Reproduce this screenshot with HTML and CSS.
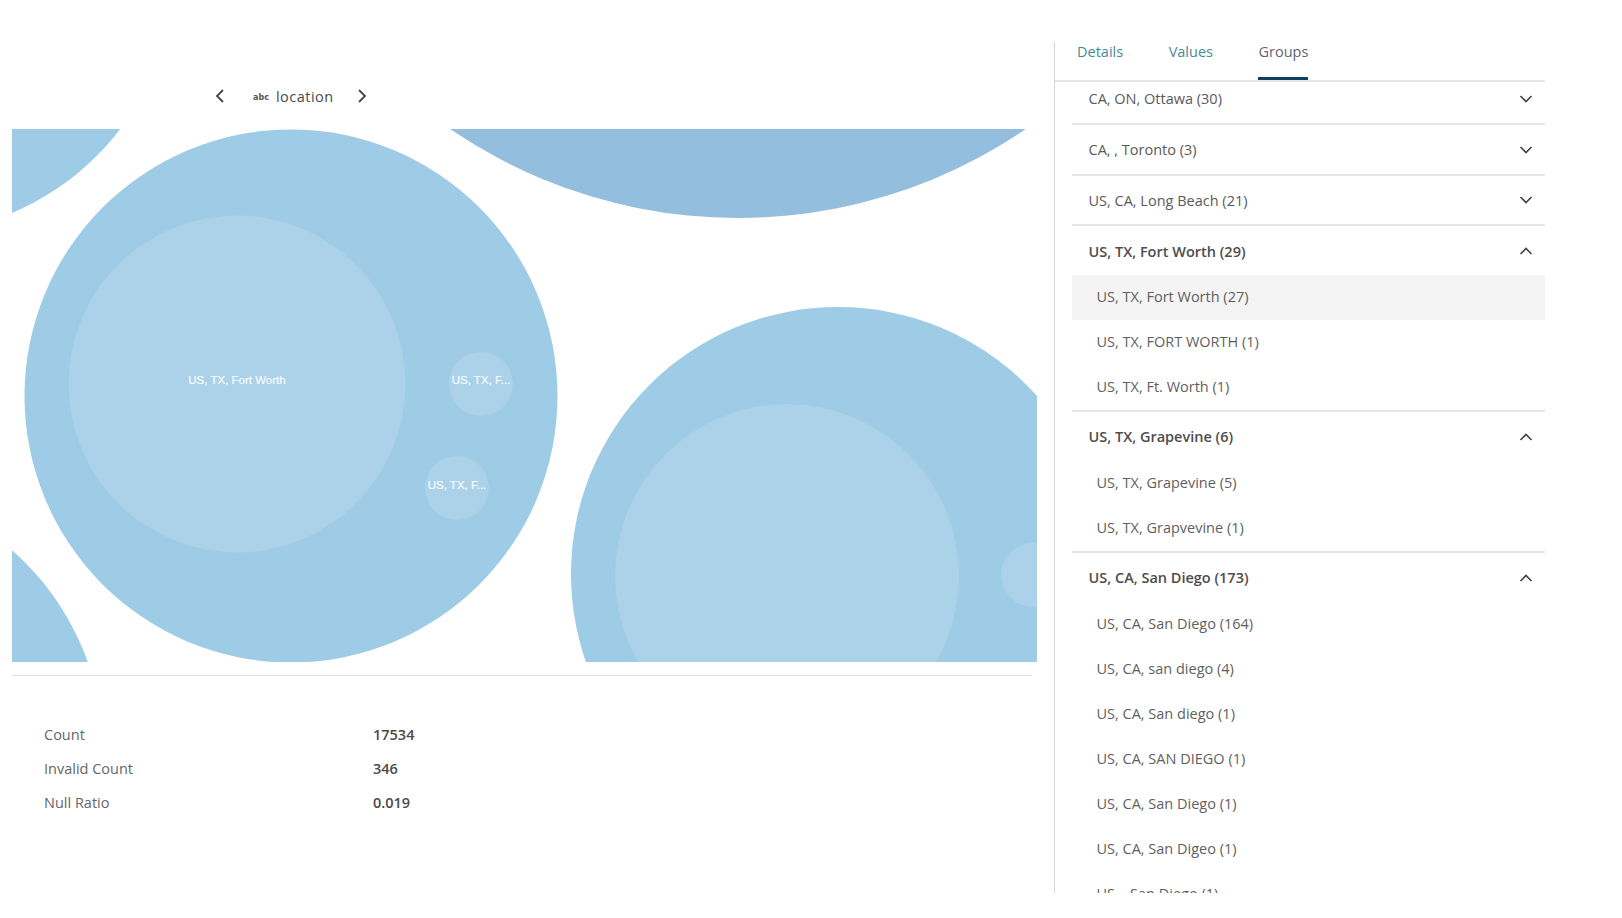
FILE: index.html
```html
<!DOCTYPE html>
<html lang="en">
<head>
<meta charset="utf-8">
<title>location</title>
<link rel="stylesheet" href="styles.css">
</head>
<body>
<div class="page">
  <main class="left">
    <div class="nav">
      <svg class="nav-chev" viewBox="0 0 12 16"><path d="M9 2 3 8l6 6"/></svg>
      <span class="abc">abc</span>
      <span class="nav-title">location</span>
      <svg class="nav-chev" viewBox="0 0 12 16"><path d="M3 2l6 6-6 6"/></svg>
    </div>
    <svg class="canvas" viewBox="12 129 1025 533" width="1025" height="533">
      <circle cx="-92" cy="-33" r="267" class="c-main"/>
      <circle cx="-164" cy="751" r="267" class="c-main"/>
      <circle cx="738" cy="-292" r="510" class="c-dark"/>
      <circle cx="291" cy="396" r="266.5" class="c-main"/>
      <circle cx="237" cy="384" r="168.5" class="c-inner"/>
      <circle cx="481" cy="384" r="32" class="c-inner"/>
      <circle cx="457" cy="488" r="32" class="c-inner"/>
      <circle cx="838" cy="574" r="267" class="c-main"/>
      <circle cx="787" cy="576" r="172" class="c-inner"/>
      <circle cx="1033" cy="575" r="32" class="c-inner"/>
      <text x="237" y="380" class="bubble">US, TX, Fort Worth</text>
      <text x="481" y="380" class="bubble">US, TX, F...</text>
      <text x="457" y="485" class="bubble">US, TX, F...</text>
    </svg>
    <div class="rule"></div>
    <dl class="stats">
      <dt>Count</dt><dd>17534</dd>
      <dt>Invalid Count</dt><dd>346</dd>
      <dt>Null Ratio</dt><dd>0.019</dd>
    </dl>
  </main>
  <aside class="panel">
    <div class="tabs">
      <span class="tab">Details</span>
      <span class="tab">Values</span>
      <span class="tab active">Groups</span>
    </div>
    <div class="scroll">
      <div class="list">
        <section class="group">
          <div class="head"><span>CA, ON, Ottawa (30)</span><svg class="chev" viewBox="0 0 14 10"><path d="M1.5 2 7 7.5 12.5 2"/></svg></div>
        </section>
        <section class="group">
          <div class="head"><span>CA, , Toronto (3)</span><svg class="chev" viewBox="0 0 14 10"><path d="M1.5 2 7 7.5 12.5 2"/></svg></div>
        </section>
        <section class="group">
          <div class="head"><span>US, CA, Long Beach (21)</span><svg class="chev" viewBox="0 0 14 10"><path d="M1.5 2 7 7.5 12.5 2"/></svg></div>
        </section>
        <section class="group open">
          <div class="head"><span>US, TX, Fort Worth (29)</span><svg class="chev" viewBox="0 0 14 10"><path d="M1.5 8 7 2.5 12.5 8"/></svg></div>
          <div class="item selected">US, TX, Fort Worth (27)</div>
          <div class="item">US, TX, FORT WORTH (1)</div>
          <div class="item">US, TX, Ft. Worth (1)</div>
        </section>
        <section class="group open">
          <div class="head"><span>US, TX, Grapevine (6)</span><svg class="chev" viewBox="0 0 14 10"><path d="M1.5 8 7 2.5 12.5 8"/></svg></div>
          <div class="item">US, TX, Grapevine (5)</div>
          <div class="item">US, TX, Grapvevine (1)</div>
        </section>
        <section class="group open">
          <div class="head"><span>US, CA, San Diego (173)</span><svg class="chev" viewBox="0 0 14 10"><path d="M1.5 8 7 2.5 12.5 8"/></svg></div>
          <div class="item">US, CA, San Diego (164)</div>
          <div class="item">US, CA, san diego (4)</div>
          <div class="item">US, CA, San diego (1)</div>
          <div class="item">US, CA, SAN DIEGO (1)</div>
          <div class="item">US, CA, San Diego (1)</div>
          <div class="item">US, CA, San Digeo (1)</div>
          <div class="item">US, , San Diego (1)</div>
        </section>
      </div>
    </div>
  </aside>
</div>
</body>
</html>
```
FILE: styles.css
```css
html, body {
  margin: 0;
  padding: 0;
  background: #fff;
}
body {
  font-family: "Open Sans", "Liberation Sans", sans-serif;
  font-size: 14.5px;
  color: #5a5a5a;
  overflow: hidden;
}
.page {
  display: flex;
  width: 1622px;
  height: 918px;
}
.left {
  width: 1054px;
  flex: none;
  padding-left: 12px;
  box-sizing: border-box;
}
.nav {
  height: 129px;
  box-sizing: border-box;
  padding: 85px 0 0 202px;
  display: flex;
  align-items: flex-start;
}
.nav-chev {
  width: 12px;
  height: 16px;
  fill: none;
  stroke: #444;
  stroke-width: 1.8;
  flex: none;
  margin-top: 3px;
}
.abc {
  font-family: "DejaVu Sans", sans-serif;
  font-weight: 700;
  font-size: 8px;
  line-height: 22px;
  margin: 2px 7px 0 27px;
  color: #555;
}
.nav-title {
  font-size: 14.5px;
  line-height: 23px;
  letter-spacing: 0.5px;
  color: #4a4a4a;
  margin-right: 22.5px;
}
.canvas {
  display: block;
  overflow: hidden;
}
.c-main { fill: #9ecbe5; }
.c-inner { fill: #abd2e8; }
.c-dark { fill: #94bedd; }
.bubble {
  font-family: "Liberation Sans", Arial, sans-serif;
  font-size: 11.5px;
  font-weight: 400;
  fill: #fff;
  stroke: #fff;
  stroke-width: 0.2;
  text-anchor: middle;
  dominant-baseline: central;
  fill-opacity: 0.9;
}
.rule {
  width: 1020px;
  height: 1px;
  background: #ddd;
  margin-top: 13px;
}
.stats {
  display: grid;
  grid-template-columns: 329px auto;
  grid-auto-rows: 33.7px;
  align-items: center;
  margin: 42px 0 0 32px;
}
.stats dt {
  margin: 0;
  color: #666;
}
.stats dd {
  margin: 0;
  font-weight: 600;
  color: #4a4a4a;
}
.panel {
  width: 490px;
  flex: none;
  height: 851px;
  margin-top: 42px;
  border-left: 1px solid #d4d4d4;
  display: flex;
  flex-direction: column;
  box-sizing: content-box;
}
.tabs {
  height: 38px;
  flex: none;
  display: flex;
  gap: 45.5px;
  padding-left: 22px;
  border-bottom: 2px solid #e6e6e6;
}
.tab {
  color: #3f8d96;
  line-height: 20px;
  height: 38px;
  position: relative;
}
.tab.active {
  color: #5d6670;
  box-sizing: border-box;
  border-bottom: 3px solid #0f3f61;
}
.scroll {
  flex: 1;
  overflow: hidden;
  padding-left: 17px;
}
.list {
  margin-top: -8px;
}
.group {
  border-bottom: 2px solid #e6e6e6;
}
.group.open:last-child {
  border-bottom: 0;
}
.head {
  height: 48.75px;
  box-sizing: border-box;
  display: flex;
  align-items: center;
  justify-content: space-between;
  padding: 1px 12px 0 16.5px;
  color: #5a5a5a;
}
.group.open .head {
  font-weight: 600;
  color: #4d4d4d;
}
.chev {
  width: 14px;
  height: 10px;
  fill: none;
  stroke: #444;
  stroke-width: 1.7;
}
.item {
  height: 45px;
  line-height: 44px;
  padding-left: 24.5px;
  color: #5f5f5f;
}
.item.selected {
  background: #f4f4f4;
}
```
